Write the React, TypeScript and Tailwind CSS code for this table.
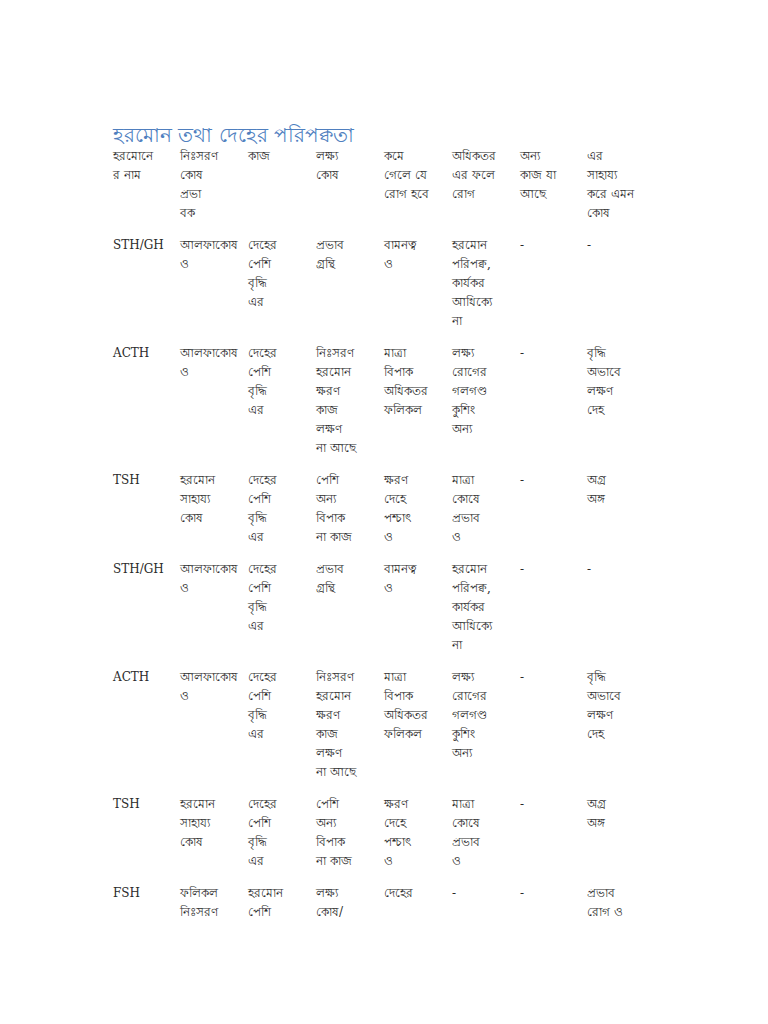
type Cell = string[];

const header: Cell[] = [
  ["হরমোনে", "র নাম"],
  ["নিঃসরণ", "কোষ", "প্রভা", "বক"],
  ["কাজ"],
  ["লক্ষ্য", "কোষ"],
  ["কমে", "গেলে যে", "রোগ হবে"],
  ["অধিকতর", "এর ফলে", "রোগ"],
  ["অন্য", "কাজ যা", "আছে"],
  ["এর", "সাহায্য", "করে এমন", "কোষ"],
];

const sth: Cell[] = [
  ["STH/GH"],
  ["আলফাকোষ", "ও"],
  ["দেহের", "পেশি", "বৃদ্ধি", "এর"],
  ["প্রভাব", "গ্রন্থি"],
  ["বামনত্ব", "ও"],
  ["হরমোন", "পরিপক্ব,", "কার্যকর", "আধিক্যে", "না"],
  ["-"],
  ["-"],
];

const acth: Cell[] = [
  ["ACTH"],
  ["আলফাকোষ", "ও"],
  ["দেহের", "পেশি", "বৃদ্ধি", "এর"],
  ["নিঃসরণ", "হরমোন", "ক্ষরণ", "কাজ", "লক্ষণ", "না আছে"],
  ["মাত্রা", "বিপাক", "অধিকতর", "ফলিকল"],
  ["লক্ষ্য", "রোগের", "গলগণ্ড", "কুশিং", "অন্য"],
  ["-"],
  ["বৃদ্ধি", "অভাবে", "লক্ষণ", "দেহ"],
];

const tsh: Cell[] = [
  ["TSH"],
  ["হরমোন", "সাহায্য", "কোষ"],
  ["দেহের", "পেশি", "বৃদ্ধি", "এর"],
  ["পেশি", "অন্য", "বিপাক", "না কাজ"],
  ["ক্ষরণ", "দেহে", "পশ্চাৎ", "ও"],
  ["মাত্রা", "কোষে", "প্রভাব", "ও"],
  ["-"],
  ["অগ্র", "অঙ্গ"],
];

const fsh: Cell[] = [
  ["FSH"],
  ["ফলিকল", "নিঃসরণ"],
  ["হরমোন", "পেশি"],
  ["লক্ষ্য", "কোষ/"],
  ["দেহের"],
  ["-"],
  ["-"],
  ["প্রভাব", "রোগ ও"],
];

const rows: Cell[][] = [header, sth, acth, tsh, sth, acth, tsh, fsh];

function Row({ cells }: { cells: Cell[] }) {
  return (
    <div className="grid grid-cols-[67px_68px_68px_68px_68px_68px_67px_68px] pb-[13px]">
      {cells.map((lines, i) => (
        <div key={i} className="pr-[6px]">
          {lines.map((line, j) => (
            <div key={j} className="whitespace-nowrap">
              {line}
            </div>
          ))}
        </div>
      ))}
    </div>
  );
}

export default function App() {
  return (
    <div className="min-h-[1024px] w-[768px] bg-white pl-[113px] pt-[123px] text-[#2b2b2b] font-['DejaVu_Serif',serif]">
      <h1 className="text-[20px] leading-[24px] text-[#4f7fbf] font-['DejaVu_Sans',sans-serif]">
        হরমোন তথা দেহের পরিপক্বতা
      </h1>
      <div className="text-[12px] leading-[19px]">
        {rows.map((cells, i) => (
          <Row key={i} cells={cells} />
        ))}
      </div>
    </div>
  );
}
